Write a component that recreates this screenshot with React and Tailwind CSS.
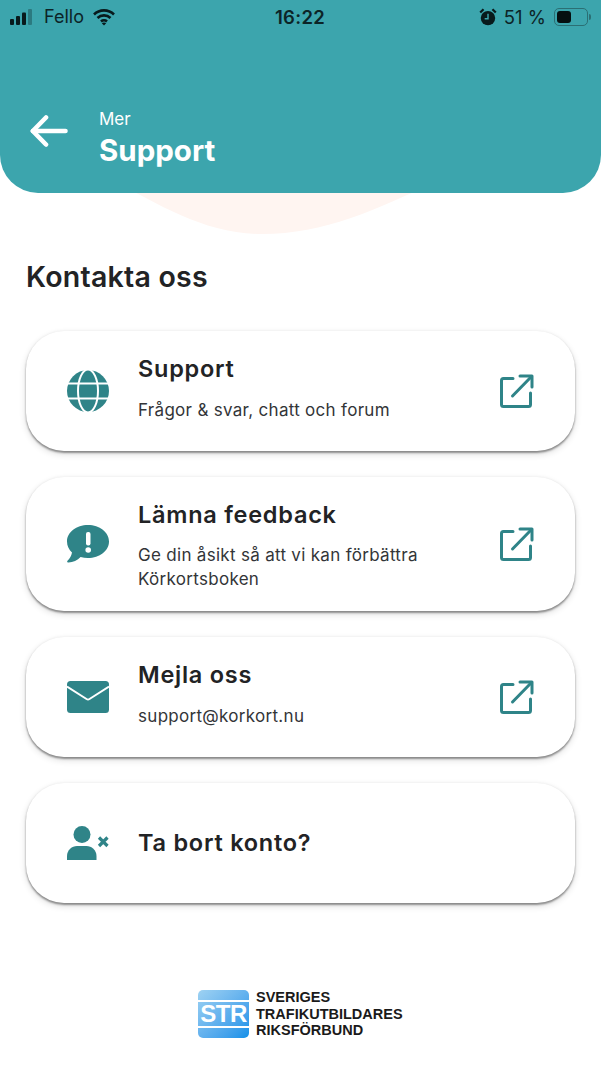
const font = { fontFamily: 'Inter, "Open Sans", sans-serif' };

function BackArrow() {
  return (
    <svg width="38" height="32" viewBox="0 0 38 32" fill="none" stroke="#fff" strokeWidth="4.600" strokeLinecap="round" strokeLinejoin="round" className="shrink-0">
      <path d="M35.500 16H3" />
      <path d="M16 2.500 2.800 16 16 29.500" />
    </svg>
  );
}

function ExternalIcon() {
  return (
    <svg width="36" height="36" viewBox="0 0 36 36" fill="none" stroke="#2f8488" strokeWidth="3" strokeLinecap="round" strokeLinejoin="round" className="shrink-0">
      <path d="M15 5.500H5.500a2 2 0 0 0-2 2v24a2 2 0 0 0 2 2h25a2 2 0 0 0 2-2V20" />
      <path d="M14.500 23 33 4" />
      <path d="M22 3h12v11" />
    </svg>
  );
}

function GlobeIcon() {
  return (
    <svg width="42" height="42" viewBox="0 0 42 42" className="shrink-0">
      <circle cx="21" cy="21" r="21" fill="#2f8488" />
      <ellipse cx="21" cy="21" rx="10" ry="21.500" fill="none" stroke="#fff" strokeWidth="2" />
      <path d="M0 13.500h42M0 28.500h42" stroke="#fff" strokeWidth="2" fill="none" />
    </svg>
  );
}

function FeedbackIcon() {
  return (
    <svg width="42" height="38" viewBox="0 0 42 38" className="shrink-0">
      <path d="M21 0c11.600 0 21 7.200 21 16.500S32.600 33 21 33c-2.600 0-5.100-.4-7.400-1C10.500 35.200 6 37.500 1.500 37.500c-1.200 0-1.800-1-1-1.800 2.300-2.200 4-5 4.500-8.200C1.900 24.700 0 20.800 0 16.500 0 7.200 9.400 0 21 0Z" fill="#2f8488" />
      <rect x="19" y="7" width="4.500" height="13.500" rx="2" fill="#fff" />
      <circle cx="21.200" cy="25" r="2.800" fill="#fff" />
    </svg>
  );
}

function MailIcon() {
  return (
    <svg width="42" height="32" viewBox="0 0 42 32" className="shrink-0">
      <rect width="42" height="32" rx="3.500" fill="#2f8488" />
      <path d="M0 5.500 19.500 18a3 3 0 0 0 3 0L42 5.500" fill="none" stroke="#fff" strokeWidth="2" />
    </svg>
  );
}

function RemoveUserIcon() {
  return (
    <svg width="42" height="34" viewBox="0 0 42 34" className="shrink-0">
      <circle cx="15" cy="8.500" r="8.500" fill="#2f8488" />
      <path d="M0 34v-4c0-6 5-10 10-10h9.500c5 0 10 4 10 10v4Z" fill="#2f8488" />
      <path d="M32 11.500l8.500 8.500M40.500 11.500 32 20" stroke="#2f8488" strokeWidth="3.200" fill="none" />
    </svg>
  );
}

function Card({ icon, title, sub, external = true, height = 'h-[120px]', subGap = 'mt-[14px]' }) {
  return (
    <div className={`${height} bg-white rounded-[38px] flex items-center pl-[41px] pr-[41px] shadow-[0_2px_2px_rgba(0,0,0,0.38),0_3px_7px_rgba(0,0,0,0.14),0_0_3px_rgba(0,0,0,0.06)]`}>
      <div className="w-[42px] flex justify-center shrink-0">{icon}</div>
      <div className={`flex-1 ml-[29px] self-stretch flex flex-col ${sub ? 'pt-[23px]' : 'justify-center'}`}>
        <div className="text-[23.500px] leading-[30px] font-semibold tracking-[0.75px] text-[#222325]">{title}</div>
        {sub && <div className={`${subGap} text-[17px] leading-[24px] text-[#333538] tracking-[0.3px]`}>{sub}</div>}
      </div>
      {external && <ExternalIcon />}
    </div>
  );
}

export default function App() {
  return (
    <div className="w-[601px] h-[1070px] bg-white relative overflow-hidden" style={font}>
      {/* peach blob behind header */}
      <svg className="absolute left-0 top-[180px]" width="601" height="60" viewBox="0 0 601 60">
        <path d="M112 0C160 25 205 54 262 54 C325 54 375 30 440 0Z" fill="#fff5f1" />
      </svg>

      {/* header */}
      <header className="relative h-[193px] bg-[#3ca5ad] rounded-b-[38px] flex flex-col">
        <div className="relative h-[34px] flex items-center justify-between pl-[9px] pr-[10px] text-[#0c2427]">
          <div className="flex items-center">
            <svg width="24" height="18" viewBox="0 0 24 18">
              <rect x="1" y="11" width="4" height="6" rx="1" fill="#081a1c" />
              <rect x="7" y="8" width="4" height="9" rx="1" fill="#081a1c" />
              <rect x="13" y="4.500" width="4" height="12.500" rx="1" fill="#081a1c" />
              <rect x="19" y="1" width="4" height="16" rx="1" fill="#2b7a80" />
            </svg>
            <span className="ml-[11px] text-[18px] leading-none">Fello</span>
            <svg className="ml-[9px]" width="22" height="18" viewBox="0 0 22 18" fill="none" stroke="#081a1c" strokeWidth="2.600">
              <path d="M1 6.500C6.500 1 15.500 1 21 6.500" />
              <path d="M4.500 10c3.600-3.500 9.400-3.500 13 0" />
              <path d="M8 13.500c1.700-1.500 4.300-1.500 6 0" />
              <path d="M11 17.500 8.800 15.200c1.200-1 3.200-1 4.400 0Z" fill="#081a1c" stroke="none" />
            </svg>
          </div>
          <span className="absolute left-[275px] top-[6px] text-[18.500px] leading-[22px] font-semibold tracking-[0.3px]">16:22</span>
          <div className="flex items-center">
            <svg width="18" height="20" viewBox="0 0 16 18">
              <circle cx="8" cy="10" r="6.500" fill="#081a1c" />
              <path d="M8 6v4.500H5" stroke="#3ca5ad" strokeWidth="1.300" fill="none" />
              <path d="M1 5l3-3M15 5l-3-3" stroke="#081a1c" strokeWidth="2" />
            </svg>
            <span className="ml-[7px] text-[18.500px] leading-none">51 %</span>
            <div className="ml-[8px] w-[34px] h-[18px] rounded-[5px] border border-[#2b6f74] p-[2px] flex">
              <div className="w-[14px] rounded-[3px] bg-[#050f10]" />
            </div>
            <div className="w-[2px] h-[6px] ml-[1px] bg-[#2b6f74] rounded-r" />
          </div>
        </div>

        <div className="flex items-start mt-[81px] pl-[30px]">
          <BackArrow />
          <div className="ml-[31px] -mt-[6px] text-white">
            <div className="text-[17px] leading-[20px]">Mer</div>
            <div className="text-[29.500px] leading-[36px] font-bold mt-[3px]">Support</div>
          </div>
        </div>
      </header>

      {/* content */}
      <main className="relative px-[26px]">
        <h1 className="mt-[65px] text-[28.500px] leading-[38px] font-semibold text-[#222325] tracking-[0.25px]">Kontakta oss</h1>
        <div className="mt-[35px] flex flex-col gap-[26px]">
          <Card icon={<GlobeIcon />} title="Support" sub="Frågor & svar, chatt och forum" />
          <Card
            icon={<FeedbackIcon />}
            title="Lämna feedback"
            sub={<>Ge din åsikt så att vi kan förbättra<br />Körkortsboken</>}
            height="h-[134px]"
            subGap="mt-[13px]"
          />
          <Card icon={<MailIcon />} title="Mejla oss" sub="support@korkort.nu" />
          <Card icon={<RemoveUserIcon />} title="Ta bort konto?" external={false} />
        </div>

        {/* STR logo */}
        <div className="mt-[86px] ml-[172px] flex items-center">
          <div className="w-[51px] h-[48px] rounded-[5px] bg-gradient-to-br from-[#9ed2f2] to-[#0a90e8] flex flex-col justify-center">
            <div className="border-y-2 border-white h-[28px] flex items-center justify-center text-white text-[24px] font-bold leading-none tracking-[-0.5px]" style={{ fontFamily: '"Liberation Sans", sans-serif' }}>STR</div>
          </div>
          <div className="ml-[7px] text-[14.500px] leading-[16.500px] font-bold text-[#1a1a1a]" style={{ fontFamily: '"Liberation Sans", sans-serif' }}>
            <div>SVERIGES</div>
            <div>TRAFIKUTBILDARES</div>
            <div>RIKSFÖRBUND</div>
          </div>
        </div>
      </main>
    </div>
  );
}
